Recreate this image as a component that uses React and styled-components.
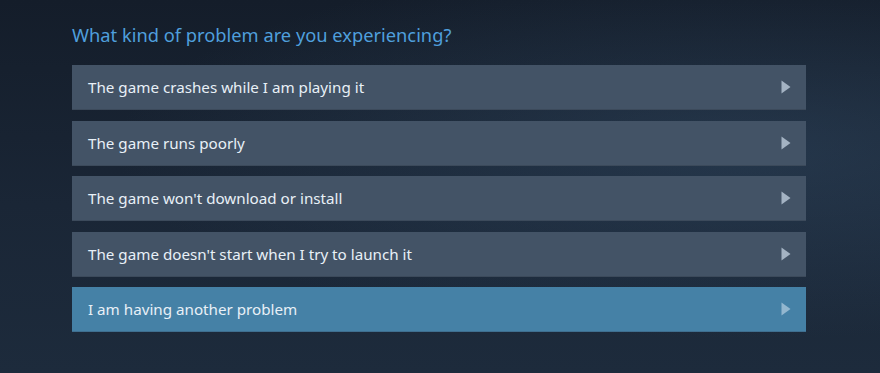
import React from "react";
import styled, { createGlobalStyle } from "styled-components";

const GlobalStyle = createGlobalStyle`
  html, body {
    margin: 0;
    padding: 0;
    background: #17212f;
  }
  body {
    font-family: "Noto Sans", "Open Sans", Arial, sans-serif;
  }
`;

const Page = styled.div`
  width: 880px;
  height: 373px;
  box-sizing: border-box;
  padding: 23px 74px 0 72px;
  background:
    radial-gradient(ellipse at 85% 40%, rgba(60, 90, 120, 0.35), transparent 60%),
    linear-gradient(180deg, #141d2a 0%, #1a2636 55%, #1d2b3c 100%);
  overflow: hidden;
`;

const Title = styled.h2`
  margin: 0 0 18px;
  font-size: 18.3px;
  font-weight: 400;
  line-height: 24px;
  color: #4f9fdc;
`;

const List = styled.div`
  display: flex;
  flex-direction: column;
  gap: 10.5px;
`;

const Option = styled.button`
  display: flex;
  align-items: center;
  justify-content: space-between;
  width: 100%;
  height: 45px;
  box-sizing: border-box;
  padding: 0 15px 0 16px;
  border: none;
  border-bottom: 1px solid ${({ $active }) => ($active ? "#3f6f90" : "#3c4a5b")};
  background: ${({ $active }) => ($active ? "#4581a6" : "#435366")};
  color: #e8f0f7;
  font-family: inherit;
  font-size: 15.2px;
  text-align: left;
  cursor: pointer;

  svg {
    color: ${({ $active }) => ($active ? "#93b7cf" : "#a4b3c3")};
    flex-shrink: 0;
  }
`;

const Arrow = () => (
  <svg width="10" height="14" viewBox="0 0 10 14">
    <path d="M0.5 0.5 L9.5 7 L0.5 13.5 Z" fill="currentColor" />
  </svg>
);

const options = [
  "The game crashes while I am playing it",
  "The game runs poorly",
  "The game won't download or install",
  "The game doesn't start when I try to launch it",
  "I am having another problem",
];

export default function App() {
  return (
    <>
      <GlobalStyle />
      <Page>
        <Title>What kind of problem are you experiencing?</Title>
        <List>
          {options.map((o, i) => (
            <Option key={o} $active={i === options.length - 1}>
              <span>{o}</span>
              <Arrow />
            </Option>
          ))}
        </List>
      </Page>
    </>
  );
}
